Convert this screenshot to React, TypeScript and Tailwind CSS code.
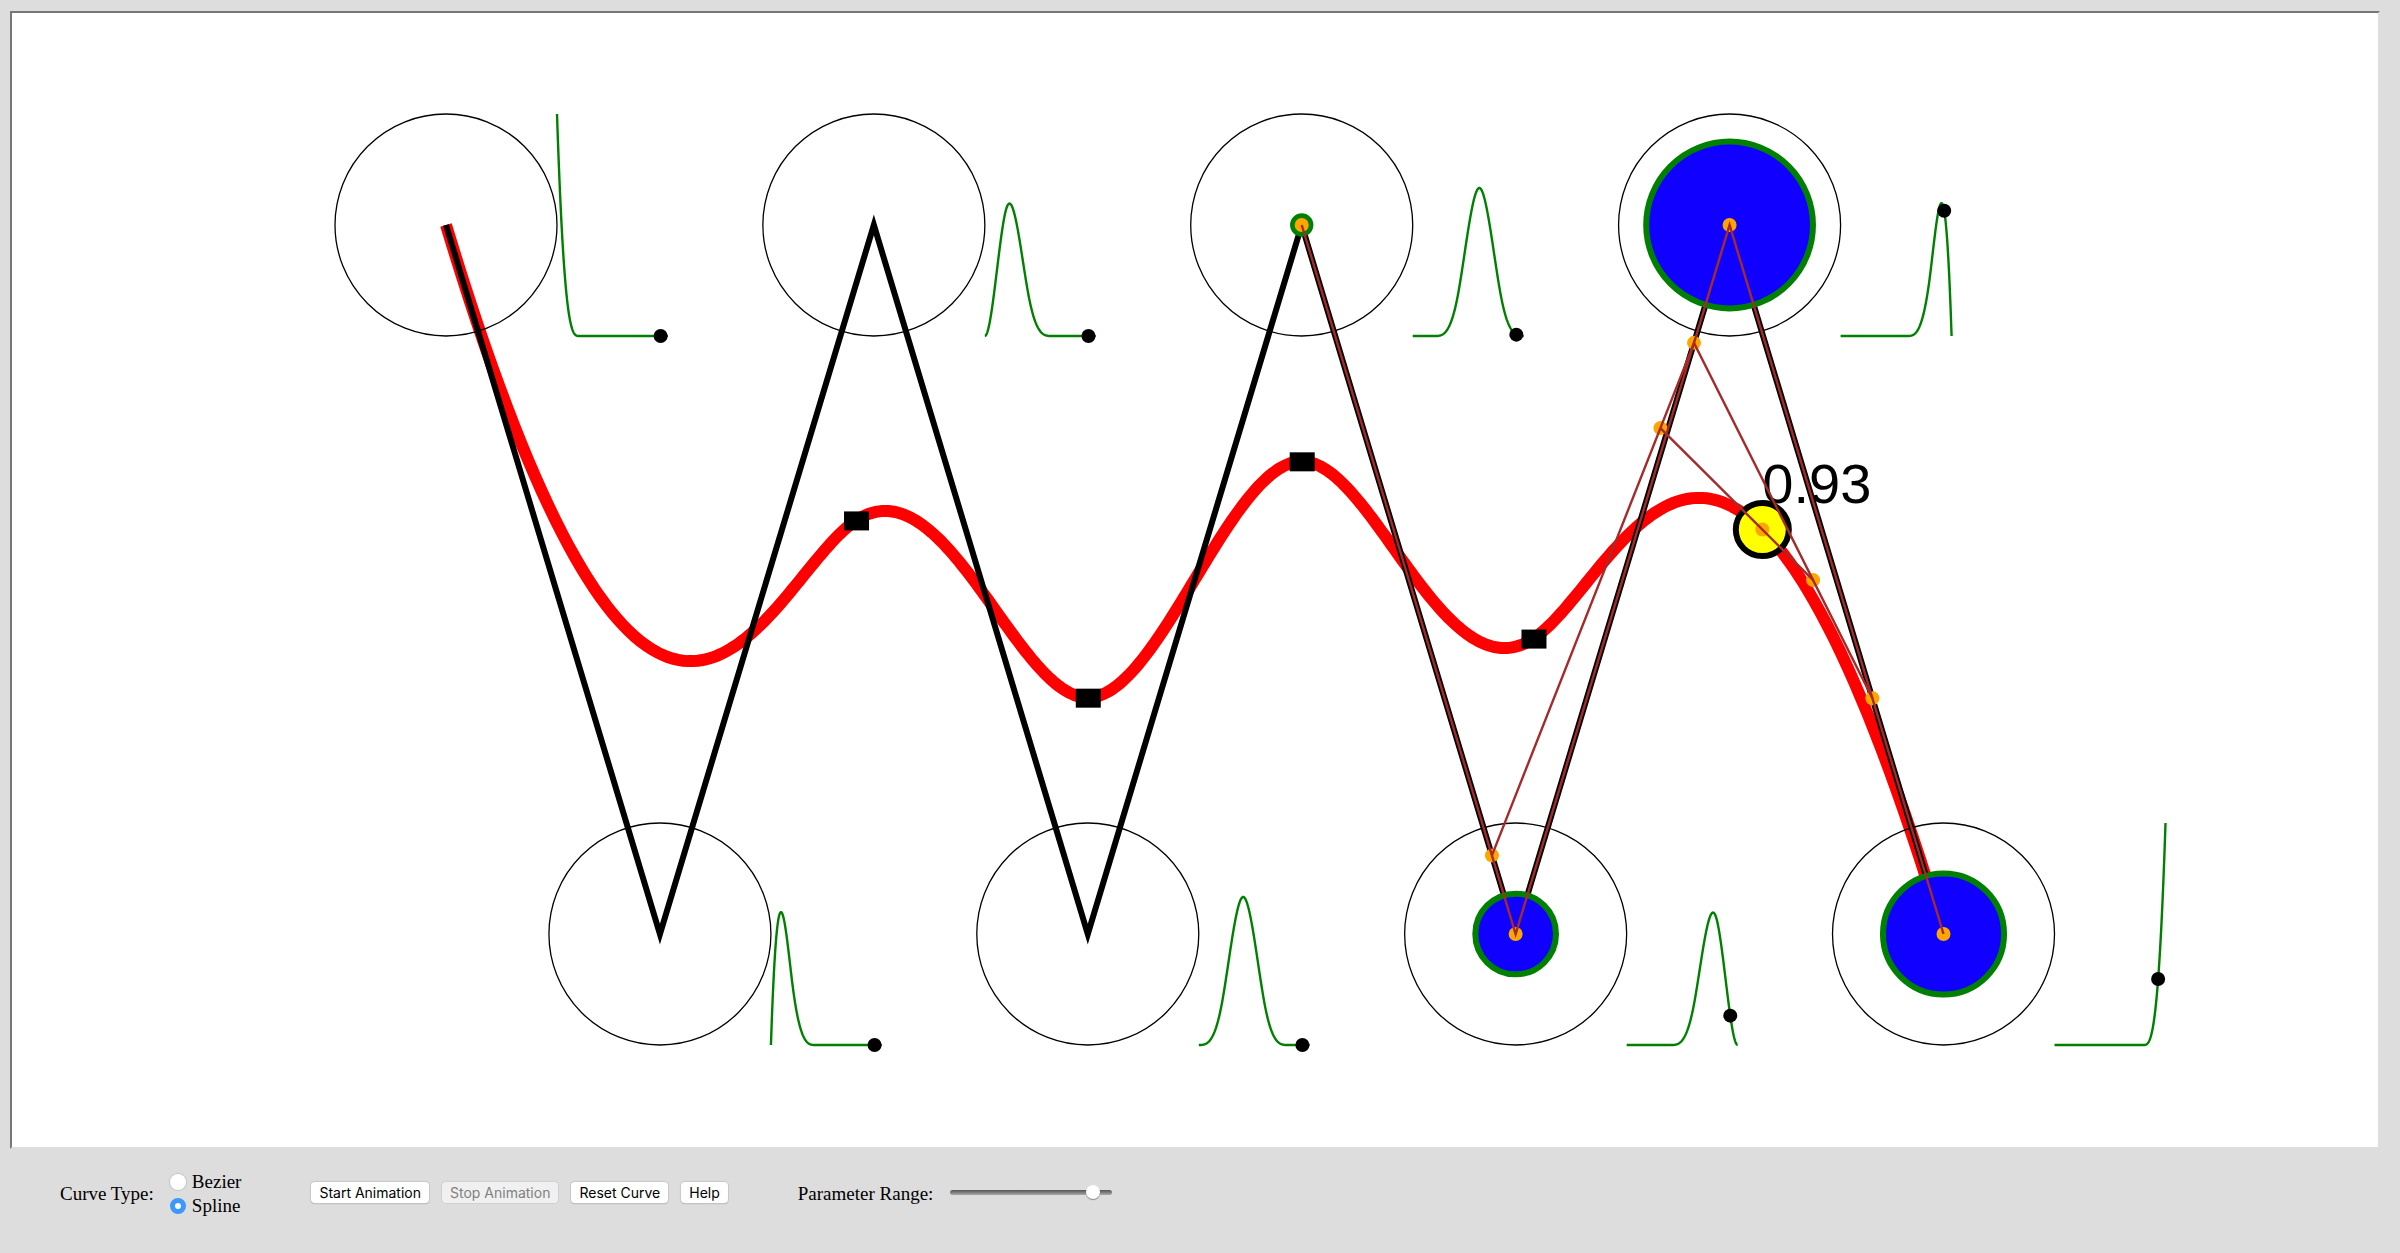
import { useState } from "react";

const DEGREE = 3;
const KNOTS = [0, 0, 0, 0, 0.2, 0.4, 0.6, 0.8, 1, 1, 1, 1];
const RADIUS = 111;

type Point = { x: number; y: number };

// zig-zag control polygon
const POINTS: Point[] = [0, 1, 2, 3, 4, 5, 6, 7].map((i) => ({
  x: 434 + i * 213.93,
  y: i % 2 === 0 ? 212 : 921,
}));

function basis(i: number, p: number, u: number): number {
  if (p === 0) {
    if (u >= 1) return i === 7 ? 1 : 0;
    return u >= KNOTS[i] && u < KNOTS[i + 1] ? 1 : 0;
  }
  const left = KNOTS[i + p] - KNOTS[i];
  const right = KNOTS[i + p + 1] - KNOTS[i + 1];
  let value = 0;
  if (left > 0) value += ((u - KNOTS[i]) / left) * basis(i, p - 1, u);
  if (right > 0)
    value += ((KNOTS[i + p + 1] - u) / right) * basis(i + 1, p - 1, u);
  return value;
}

function curveAt(u: number): Point {
  let x = 0;
  let y = 0;
  POINTS.forEach((point, i) => {
    const weight = basis(i, DEGREE, u);
    x += weight * point.x;
    y += weight * point.y;
  });
  return { x, y };
}

// every level of the de Boor scheme, from the control points to the curve
function deBoor(u: number): Point[][] {
  let k = DEGREE;
  while (k < 7 && u >= KNOTS[k + 1]) k++;
  const levels = [POINTS.slice(k - DEGREE, k + 1)];
  for (let r = 1; r <= DEGREE; r++) {
    const prev = levels[r - 1];
    const next: Point[] = [];
    for (let j = 1; j < prev.length; j++) {
      const i = k - DEGREE + r + j - 1;
      const a = (u - KNOTS[i]) / (KNOTS[i + DEGREE + 1 - r] - KNOTS[i]);
      next.push({
        x: (1 - a) * prev[j - 1].x + a * prev[j].x,
        y: (1 - a) * prev[j - 1].y + a * prev[j].y,
      });
    }
    levels.push(next);
  }
  return levels;
}

function toPolyline(points: Point[]) {
  return points.map((p) => `${p.x.toFixed(2)},${p.y.toFixed(2)}`).join(" ");
}

const SAMPLES = Array.from({ length: 401 }, (_, n) => n / 400);
const CURVE = toPolyline(SAMPLES.map(curveAt));

type BlendProps = {
  index: number;
  u: number;
};

function BlendingFunction({ index, u }: BlendProps) {
  const { x, y } = POINTS[index];
  const left = x + RADIUS;
  const bottom = y + RADIUS;
  const weight = basis(index, DEGREE, u);
  const graph = SAMPLES.map((s) => ({
    x: left + s * RADIUS,
    y: bottom - basis(index, DEGREE, s) * RADIUS * 2,
  }));
  return (
    <g>
      {weight > 0 && (
        <circle
          cx={x}
          cy={y}
          r={RADIUS * Math.sqrt(weight)}
          fill="#1000ff"
          stroke="green"
          strokeWidth="6"
        />
      )}
      <circle cx={x} cy={y} r={RADIUS} fill="none" stroke="black" strokeWidth="1.3" />
      <polyline points={toPolyline(graph)} fill="none" stroke="green" strokeWidth="2.4" />
      <circle cx={left + u * RADIUS} cy={bottom - weight * RADIUS * 2} r="7" />
    </g>
  );
}

function CurveCanvas({ u }: { u: number }) {
  const levels = deBoor(u);
  const current = levels[DEGREE][0];
  return (
    <svg viewBox="0 0 2366 1134" className="block w-full" role="img" aria-label="Curve">
      <polyline points={CURVE} fill="none" stroke="red" strokeWidth="12" />
      <polyline points={toPolyline(POINTS)} fill="none" stroke="black" strokeWidth="6" />
      {[0.2, 0.4, 0.6, 0.8].map((knot) => {
        const p = curveAt(knot);
        return <rect key={knot} x={p.x - 12} y={p.y - 9} width="25" height="19" />;
      })}
      {POINTS.map((_, i) => (
        <BlendingFunction key={i} index={i} u={u} />
      ))}
      <circle
        cx={current.x}
        cy={current.y}
        r="26.5"
        fill="yellow"
        stroke="black"
        strokeWidth="6"
      />
      <text
        x={current.x}
        y={current.y - 27}
        className="font-['Liberation_Sans',sans-serif] text-[56px]"
      >
        {u.toFixed(2)}
      </text>
      {levels.map((level, r) => (
        <g key={r}>
          {level.map((p, i) => (
            <circle key={i} cx={p.x} cy={p.y} r="7" fill="orange" />
          ))}
        </g>
      ))}
      {levels.map((level, r) => (
        <polyline
          key={r}
          points={toPolyline(level)}
          fill="none"
          stroke="brown"
          strokeWidth="2.4"
        />
      ))}
    </svg>
  );
}

const buttonClass =
  "h-[21px] rounded-[4px] bg-white px-2 font-['Inter','Liberation_Sans',sans-serif] text-[14px] leading-[21px] shadow-[0_0_1px_1px_#c8c8c8,0_1px_1px_#999] disabled:bg-[#f0f0f0] disabled:text-[#808080] disabled:shadow-[0_0_1px_1px_#cfcfcf]";

const radioClass =
  "size-4 appearance-none rounded-full bg-white shadow-[0_0_1px_1px_#c4c4c4] checked:border-[5px] checked:border-[#3b99fc] checked:shadow-none";

export default function App() {
  const [type, setType] = useState("spline");
  const [u, setU] = useState(0.9335);
  const [running, setRunning] = useState(false);

  return (
    <div className="min-h-screen bg-[#dddddd] pt-[11px] pr-5 pl-[10px] font-['Liberation_Serif',serif] text-[19px] leading-6 text-black">
      <main className="border-2 border-t-[#777] border-r-[#dddddd] border-b-[#dddddd] border-l-[#777] bg-white">
        <CurveCanvas u={u} />
      </main>
      <form className="flex items-center pt-[21px] pl-[50px]">
        <fieldset className="flex items-center gap-4">
          <span>Curve Type:</span>
          <div className="flex flex-col">
            <label className="flex items-center gap-[6px]">
              <input
                type="radio"
                name="type"
                className={radioClass}
                checked={type === "bezier"}
                onChange={() => setType("bezier")}
              />
              Bezier
            </label>
            <label className="flex items-center gap-[6px]">
              <input
                type="radio"
                name="type"
                className={radioClass}
                checked={type === "spline"}
                onChange={() => setType("spline")}
              />
              Spline
            </label>
          </div>
        </fieldset>
        <div className="ml-[70px] flex items-center gap-[13px] pb-1">
          <button
            type="button"
            className={buttonClass}
            disabled={running}
            onClick={() => setRunning(true)}
          >
            Start Animation
          </button>
          <button
            type="button"
            className={buttonClass}
            disabled={!running}
            onClick={() => setRunning(false)}
          >
            Stop Animation
          </button>
          <button type="button" className={buttonClass} onClick={() => setU(0.9335)}>
            Reset Curve
          </button>
          <button type="button" className={buttonClass}>
            Help
          </button>
        </div>
        <label className="ml-[70px] flex items-center gap-[17px]">
          Parameter Range:
          <input
            type="range"
            min="0"
            max="1"
            step="any"
            value={u}
            onChange={(e) => setU(Number(e.target.value))}
            className="mb-1 h-[5px] w-[162px] appearance-none rounded-full bg-linear-to-b from-[#555] to-[#aaa] px-[3px] [&::-webkit-slider-thumb]:size-[14px] [&::-webkit-slider-thumb]:appearance-none [&::-webkit-slider-thumb]:rounded-full [&::-webkit-slider-thumb]:bg-white [&::-webkit-slider-thumb]:shadow-[0_1px_1px_#888]"
          />
        </label>
      </form>
    </div>
  );
}
